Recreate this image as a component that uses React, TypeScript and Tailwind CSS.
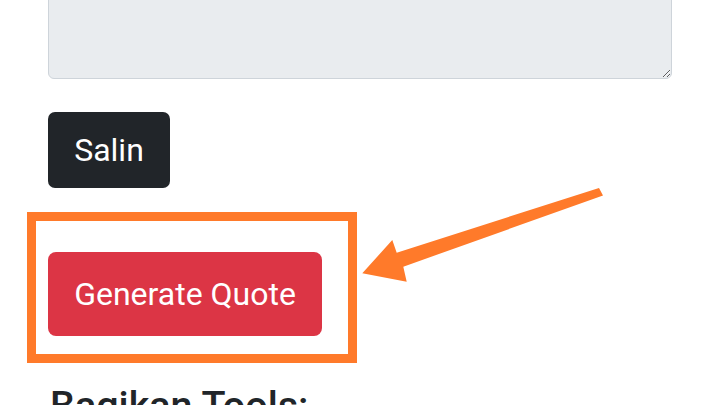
import { useState } from 'react';

export default function App() {
  const [quote, setQuote] = useState('');

  return (
    <div className="relative w-[720px] h-[405px] overflow-hidden bg-white font-['Roboto',sans-serif] text-[#212529]">
      <div className="px-12 pt-px">
        {/* Output box, scrolled so only its lower part shows */}
        <textarea
          value={quote}
          onChange={(e) => setQuote(e.target.value)}
          readOnly
          className="block w-full h-[120px] -mt-[42px] rounded-[6px] border border-[#ced4da] bg-[#e9ecef] outline-none"
        />

        <button className="mt-[33px] flex items-center justify-center w-[122px] h-[76px] rounded-[7px] bg-[#212529] text-white text-[32px] leading-none">
          Salin
        </button>

        <div className="relative mt-[64px] w-[274px]">
          <button className="flex items-center justify-center w-[274px] h-[84px] rounded-[8px] bg-[#dc3545] text-white text-[32px] leading-none">
            Generate Quote
          </button>
          {/* Highlight frame */}
          <div className="absolute -left-[21px] -top-[40px] w-[330px] h-[151px] border-[9px] border-[#ff7a2a] pointer-events-none" />
        </div>

        <h2 className="mt-[46px] pl-[2px] text-[39.5px] font-medium leading-[1.2]">Bagikan Tools:</h2>
      </div>

      {/* Pointer arrow */}
      <svg
        className="absolute left-0 top-0 pointer-events-none"
        width="720"
        height="405"
        viewBox="0 0 720 405"
      >
        <polygon
          fill="#ff7a2a"
          points="599,188 603,195.5 403.3,266.7 406.7,281.7 362.3,273.3 392.3,240 396.7,252.7"
        />
      </svg>
    </div>
  );
}
